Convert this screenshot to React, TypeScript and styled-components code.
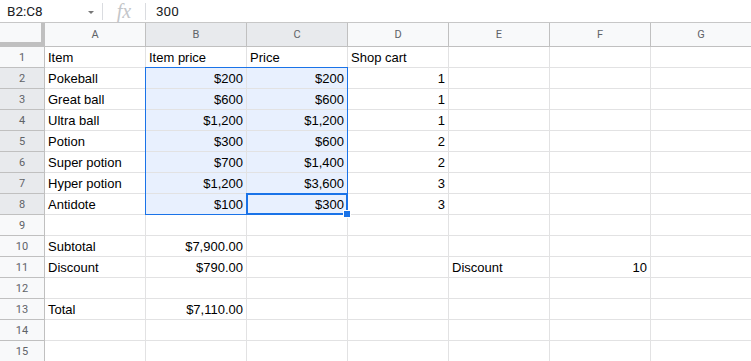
import React from "react"
import styled, { createGlobalStyle, css } from "styled-components"

const COLS = ["A", "B", "C", "D", "E", "F", "G"]
const ROWS = 15
const COL_W = 101
const ROW_H = 21
const HEAD_W = 45
const HEAD_H = 24

type Cell = { v: string; num?: boolean }

const data: Record<number, (Cell | null)[]> = {
  1: [{ v: "Item" }, { v: "Item price" }, { v: "Price" }, { v: "Shop cart" }],
  2: [{ v: "Pokeball" }, { v: "$200", num: true }, { v: "$200", num: true }, { v: "1", num: true }],
  3: [{ v: "Great ball" }, { v: "$600", num: true }, { v: "$600", num: true }, { v: "1", num: true }],
  4: [{ v: "Ultra ball" }, { v: "$1,200", num: true }, { v: "$1,200", num: true }, { v: "1", num: true }],
  5: [{ v: "Potion" }, { v: "$300", num: true }, { v: "$600", num: true }, { v: "2", num: true }],
  6: [{ v: "Super potion" }, { v: "$700", num: true }, { v: "$1,400", num: true }, { v: "2", num: true }],
  7: [{ v: "Hyper potion" }, { v: "$1,200", num: true }, { v: "$3,600", num: true }, { v: "3", num: true }],
  8: [{ v: "Antidote" }, { v: "$100", num: true }, { v: "$300", num: true }, { v: "3", num: true }],
  10: [{ v: "Subtotal" }, { v: "$7,900.00", num: true }],
  11: [{ v: "Discount" }, { v: "$790.00", num: true }, null, null, { v: "Discount" }, { v: "10", num: true }],
  13: [{ v: "Total" }, { v: "$7,110.00", num: true }],
}

// selection B2:C8, active C8
const sel = { c1: 1, c2: 2, r1: 2, r2: 8 }
const active = { c: 2, r: 8 }
const inSel = (c: number, r: number) => c >= sel.c1 && c <= sel.c2 && r >= sel.r1 && r <= sel.r2

const GlobalStyle = createGlobalStyle`
  html, body { margin: 0; padding: 0; background: #fff; overflow: hidden; }
  body { font-family: "Liberation Sans", Arial, sans-serif; }
`

export default function App() {
  return (
    <>
      <GlobalStyle />
      <Page>
        <FormulaBar>
          <NameBox>
            <span>B2:C8</span>
            <Caret />
          </NameBox>
          <Divider />
          <Fx>fx</Fx>
          <Divider />
          <FormulaValue>300</FormulaValue>
        </FormulaBar>
        <SheetWrap>
          <Grid>
            <Corner />
            {COLS.map((c, i) => (
              <ColHead key={c} $active={i >= sel.c1 && i <= sel.c2}>
                {c}
              </ColHead>
            ))}
            {Array.from({ length: ROWS }, (_, ri) => {
              const r = ri + 1
              const row = data[r] || []
              return (
                <React.Fragment key={r}>
                  <RowHead $active={r >= sel.r1 && r <= sel.r2}>{r}</RowHead>
                  {COLS.map((_c, ci) => {
                    const cell = row[ci]
                    return (
                      <DataCell key={ci} $num={cell?.num} $sel={inSel(ci, r)}>
                        {cell?.v}
                      </DataCell>
                    )
                  })}
                </React.Fragment>
              )
            })}
          </Grid>
          <Selection
            style={{
              left: HEAD_W + sel.c1 * COL_W - 1,
              top: HEAD_H + (sel.r1 - 1) * ROW_H - 1,
              width: (sel.c2 - sel.c1 + 1) * COL_W + 1,
              height: (sel.r2 - sel.r1 + 1) * ROW_H + 1,
            }}
          />
          <ActiveCell
            style={{
              left: HEAD_W + active.c * COL_W - 1,
              top: HEAD_H + (active.r - 1) * ROW_H - 1,
              width: COL_W + 1,
              height: ROW_H + 1,
            }}
          >
            <FillHandle />
          </ActiveCell>
        </SheetWrap>
      </Page>
    </>
  )
}

const Page = styled.div`
  width: 751px;
  height: 361px;
  overflow: hidden;
`

const FormulaBar = styled.div`
  display: flex;
  align-items: center;
  height: 23px;
  box-sizing: border-box;
  border-bottom: 1px solid #c7c7c7;
  font-family: Roboto, "Liberation Sans", sans-serif;
`

const NameBox = styled.div`
  display: flex;
  align-items: center;
  justify-content: space-between;
  width: 102px;
  box-sizing: border-box;
  padding: 0 8px 0 7px;
  font-size: 13.5px;
  color: #202124;
`

const Caret = styled.span`
  width: 0;
  height: 0;
  border-left: 3.5px solid transparent;
  border-right: 3.5px solid transparent;
  border-top: 3.5px solid #777;
  margin-top: 2px;
`

const Divider = styled.div`
  width: 1px;
  height: 17px;
  background: #dadce0;
`

const Fx = styled.div`
  width: 42px;
  text-align: center;
  font-family: "Liberation Serif", serif;
  font-style: italic;
  font-size: 20px;
  color: #c4c6c9;
  line-height: 22px;
`

const FormulaValue = styled.div`
  padding-left: 10px;
  font-size: 13.5px;
  color: #202124;
`

const SheetWrap = styled.div`
  position: relative;
`

const Grid = styled.div`
  display: grid;
  grid-template-columns: ${HEAD_W}px repeat(${COLS.length}, ${COL_W}px);
  grid-template-rows: ${HEAD_H}px repeat(${ROWS}, ${ROW_H}px);
`

const headBase = css`
  box-sizing: border-box;
  background: #f8f9fa;
  color: #5f6368;
  font-family: Roboto, "Liberation Sans", sans-serif;
  font-size: 11px;
  display: flex;
  align-items: center;
  justify-content: center;
`

const Corner = styled.div`
  ${headBase};
  border-right: 4px solid #c0c0c0;
  border-bottom: 5px solid #c0c0c0;
`

const ColHead = styled.div<{ $active?: boolean }>`
  ${headBase};
  border-right: 1px solid #c0c0c0;
  border-bottom: 1px solid #c0c0c0;
  ${(p) => p.$active && "background: #e8eaed;"}
`

const RowHead = styled.div<{ $active?: boolean }>`
  ${headBase};
  border-right: 1px solid #c0c0c0;
  border-bottom: 1px solid #c0c0c0;
  padding-top: 1px;
  ${(p) => p.$active && "background: #e8eaed;"}
`

const DataCell = styled.div<{ $num?: boolean; $sel?: boolean }>`
  box-sizing: border-box;
  border-right: 1px solid #e2e2e3;
  border-bottom: 1px solid #e2e2e3;
  padding: 0 3px;
  font-size: 13px;
  line-height: 21px;
  color: #000;
  white-space: nowrap;
  overflow: hidden;
  text-align: ${(p) => (p.$num ? "right" : "left")};
  background: ${(p) => (p.$sel ? "#e8f0fe" : "#fff")};
`

const Selection = styled.div`
  position: absolute;
  box-sizing: border-box;
  border: 1px solid #1a73e8;
  pointer-events: none;
`

const ActiveCell = styled.div`
  position: absolute;
  box-sizing: border-box;
  border: 2px solid #1a73e8;
  pointer-events: none;
`

const FillHandle = styled.div`
  position: absolute;
  right: -5px;
  bottom: -5px;
  width: 6px;
  height: 6px;
  background: #1a73e8;
  border: 1px solid #fff;
`
